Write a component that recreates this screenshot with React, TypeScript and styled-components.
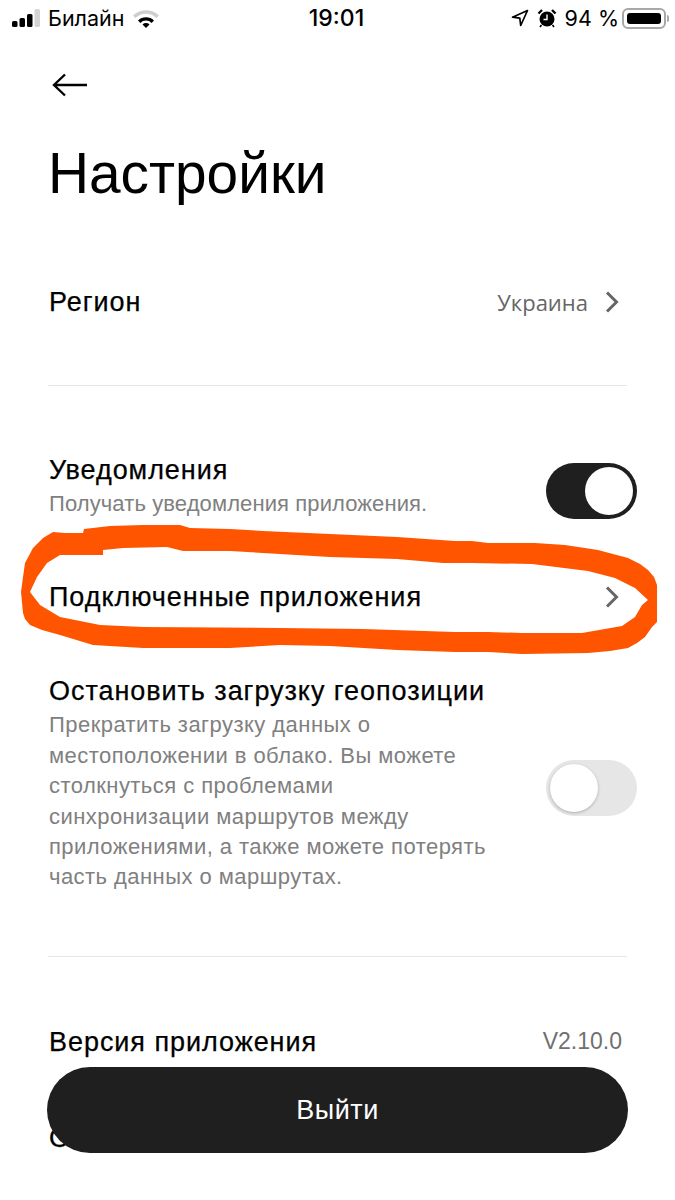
import React from "react";
import styled, { createGlobalStyle } from "styled-components";

const GlobalStyle = createGlobalStyle`
    html, body {
        margin: 0;
        padding: 0;
        background: #ffffff;
    }
`;

// hand-drawn marker ring, traced in page coordinates
const outerRing = [
    [53, 532], [65, 533], [83, 533], [84, 529], [110, 526], [143, 525], [180, 525], [190, 528], [230, 529],
    [263, 531], [330, 534], [397, 537], [455, 541], [472, 541], [488, 543], [535, 543], [565, 545], [598, 550],
    [628, 558], [640, 564], [648, 570], [654, 577], [657, 585], [657, 622], [652, 627], [645, 637], [637, 643],
    [628, 648], [610, 651], [588, 653], [522, 654], [488, 652], [455, 652], [397, 650], [330, 646], [280, 645],
    [230, 648], [143, 648], [93, 645], [60, 635], [42, 630], [30, 625], [25, 619], [23, 613], [21, 592],
    [23, 577], [25, 563], [33, 548], [43, 538],
];

const innerRing = [
    [103, 555], [103, 550], [123, 548], [167, 547], [183, 551], [230, 551], [263, 553], [330, 557], [397, 559],
    [443, 563], [472, 563], [532, 564], [588, 571], [615, 578], [635, 588], [648, 600], [642, 605], [635, 617],
    [622, 626], [582, 633], [522, 633], [488, 632], [455, 632], [363, 629], [280, 628], [143, 627], [100, 625],
    [60, 617], [40, 605], [30, 592], [37, 577], [47, 563], [60, 555],
];

const toPath = (points: number[][]) =>
    "M" + points.map((p) => p.join(" ")).join("L") + "Z";

function Chevron() {
    return (
        <ChevronIcon viewBox="0 0 16 24">
            <path d="M3 2.5l9.5 9.5-9.5 9.5" fill="none" stroke="#666666" strokeWidth="3" />
        </ChevronIcon>
    );
}

export default function App() {
    return (
        <Page>
            <GlobalStyle />
            <StatusBar>
                <StatusLeft>
                    <svg width="30" height="22" viewBox="0 0 30 22">
                        <rect x="1" y="14" width="5.5" height="6" rx="1.5" fill="#000" />
                        <rect x="8.5" y="11" width="5.5" height="9" rx="1.5" fill="#000" />
                        <rect x="16" y="7" width="5.5" height="13" rx="1.5" fill="#000" />
                        <rect x="23.5" y="2" width="5.5" height="18" rx="1.5" fill="#d4d4d4" />
                    </svg>
                    <span>Билайн</span>
                    <WifiIcon width="28" height="20" viewBox="0 0 28 20">
                        <path d="M1 7.5a18.5 18.5 0 0 1 26 0l-2.5 2.6a15 15 0 0 0-21 0z" fill="#cfcfcf" />
                        <path d="M6 12.4a11.5 11.5 0 0 1 16 0l-2.4 2.5a8 8 0 0 0-11.2 0z" fill="#000" />
                        <path d="M10.5 16.5a5 5 0 0 1 7 0L14 20z" fill="#000" />
                    </WifiIcon>
                </StatusLeft>
                <Clock>19:01</Clock>
                <StatusRight>
                    <svg width="18" height="18" viewBox="0 0 18 18">
                        <path d="M16.5 1.5L1.5 8.2l7.3.9.9 7.4z" fill="none" stroke="#000" strokeWidth="1.7" strokeLinejoin="round" />
                    </svg>
                    <svg width="20" height="20" viewBox="0 0 20 20">
                        <circle cx="10" cy="11" r="7.5" fill="#000" />
                        <path d="M1.5 5.5L5 2M18.5 5.5L15 2" stroke="#000" strokeWidth="2.4" />
                        <path d="M10 6.5V11.5H6.5" fill="none" stroke="#fff" strokeWidth="1.4" />
                        <path d="M4.5 17l-1.5 2M15.5 17l1.5 2" stroke="#000" strokeWidth="1.6" />
                    </svg>
                    <span>94 %</span>
                    <Battery>
                        <BatteryFill />
                    </Battery>
                    <BatteryCap />
                </StatusRight>
            </StatusBar>

            <Content>
                <BackButton>
                    <svg width="36" height="24" viewBox="0 0 36 24">
                        <path d="M35 12H2M13 1.5L2 12l11 10.5" fill="none" stroke="#000" strokeWidth="2.4" />
                    </svg>
                </BackButton>
                <Title>Настройки</Title>

                <RegionRow>
                    <RowTitle>Регион</RowTitle>
                    <RowValue>
                        <ValueText>Украина</ValueText>
                        <Chevron />
                    </RowValue>
                </RegionRow>

                <Divider />

                <ToggleRow $top={68}>
                    <div>
                        <RowTitle>Уведомления</RowTitle>
                        <Description $tight>Получать уведомления приложения.</Description>
                    </div>
                    <Toggle $on />
                </ToggleRow>

                <LinkRow>
                    <RowTitle>Подключенные приложения</RowTitle>
                    <Chevron />
                </LinkRow>

                <ToggleRow $top={62}>
                    <div>
                        <RowTitle>Остановить загрузку геопозиции</RowTitle>
                        <Description>
                            Прекратить загрузку данных о
                            <br />
                            местоположении в облако. Вы можете
                            <br />
                            столкнуться с проблемами
                            <br />
                            синхронизации маршрутов между
                            <br />
                            приложениями, а также можете потерять
                            <br />
                            часть данных о маршрутах.
                        </Description>
                    </div>
                    <Toggle />
                </ToggleRow>

                <Divider $top={63} />

                <VersionRow>
                    <RowTitle>Версия приложения</RowTitle>
                    <VersionText>V2.10.0</VersionText>
                </VersionRow>

                <HiddenRow>
                    <RowTitle>Очистить кэш</RowTitle>
                </HiddenRow>
            </Content>

            <LogoutButton>Выйти</LogoutButton>

            <RingMark viewBox="0 510 675 160" width="675" height="160">
                <path d={toPath(outerRing) + toPath(innerRing)} fill="#ff5500" fillRule="evenodd" />
            </RingMark>
        </Page>
    );
}

const Page = styled.div`
    position: relative;
    width: 675px;
    height: 1200px;
    overflow: hidden;
    background: #ffffff;
    color: #000000;
    font-family: "Liberation Sans", Arial, sans-serif;
`;

const StatusBar = styled.div`
    display: grid;
    grid-template-columns: 1fr auto 1fr;
    align-items: center;
    height: 36px;
    padding: 0 6px 0 11px;
    font-family: Inter, "Liberation Sans", sans-serif;
    font-size: 21.5px;
`;

const StatusLeft = styled.div`
    display: flex;
    align-items: center;
    gap: 7px;
`;

const WifiIcon = styled.svg`
    margin-left: 1px;
`;

const Clock = styled.div`
    margin-right: 7px;
    font-weight: 500;
    font-size: 23px;
`;

const StatusRight = styled.div`
    display: flex;
    align-items: center;
    justify-content: flex-end;
    gap: 8px;
`;

const Battery = styled.div`
    display: flex;
    width: 44px;
    height: 21px;
    box-sizing: border-box;
    margin-left: -5px;
    padding: 3px;
    border: 2px solid #a8a8a8;
    border-radius: 6px;
`;

const BatteryFill = styled.div`
    flex: 1;
    background: #000000;
    border-radius: 3px;
`;

const BatteryCap = styled.div`
    width: 2px;
    height: 7px;
    margin-left: -7px;
    background: #a8a8a8;
    border-radius: 0 2px 2px 0;
`;

const Content = styled.div`
    padding: 0 48px;
`;

const BackButton = styled.div`
    display: flex;
    height: 24px;
    margin: 37px 0 0 4px;
`;

const Title = styled.h1`
    margin: 42px 0 0;
    font-size: 56.8px;
    line-height: 70px;
    font-weight: 400;
`;

const RegionRow = styled.div`
    display: flex;
    align-items: center;
    justify-content: space-between;
    height: 32px;
    margin: 77px 7px 0 1px;
`;

const RowTitle = styled.div`
    font-size: 27px;
    line-height: 32px;
    font-weight: 400;
    letter-spacing: 0.95px;
    -webkit-text-stroke: 0.25px #000000;
`;

const RowValue = styled.div`
    display: flex;
    align-items: center;
    gap: 16px;
`;

const ValueText = styled.span`
    font-family: "Open Sans", sans-serif;
    font-size: 22px;
    color: #666666;
`;

const ChevronIcon = styled.svg`
    display: block;
    width: 16px;
    height: 24px;
`;

const Divider = styled.div<{ $top?: number }>`
    height: 1px;
    margin-top: ${(p) => p.$top ?? 67}px;
    background: #e6e6e6;
`;

const ToggleRow = styled.div<{ $top: number }>`
    display: flex;
    align-items: center;
    justify-content: space-between;
    margin: ${(p) => p.$top}px -10px 0 1px;
`;

const Description = styled.div<{ $tight?: boolean }>`
    margin-top: 3px;
    font-size: 22px;
    line-height: 30.4px;
    letter-spacing: ${(p) => (p.$tight ? "0.1px" : "0.45px")};
    color: #808080;
`;

const Toggle = styled.div<{ $on?: boolean }>`
    display: flex;
    justify-content: ${(p) => (p.$on ? "flex-end" : "flex-start")};
    width: 91px;
    height: 56px;
    box-sizing: border-box;
    margin-top: 8px;
    padding: 4px;
    border-radius: 28px;
    background: ${(p) => (p.$on ? "#1f1f1f" : "#e6e6e6")};

    &::after {
        content: "";
        width: 48px;
        height: 48px;
        border-radius: 50%;
        background: #ffffff;
        box-shadow: ${(p) => (p.$on ? "none" : "0 1px 3px rgba(0, 0, 0, 0.25)")};
    }
`;

const LinkRow = styled.div`
    display: flex;
    align-items: center;
    justify-content: space-between;
    height: 32px;
    margin: 62px 7px 0 1px;
`;

const VersionRow = styled.div`
    display: flex;
    align-items: center;
    justify-content: space-between;
    height: 32px;
    margin: 69px 5px 0 1px;
`;

const VersionText = styled.span`
    font-size: 23px;
    color: #707070;
`;

const HiddenRow = styled.div`
    margin: 64px 0 0 1px;
`;

const LogoutButton = styled.button`
    position: absolute;
    left: 47px;
    top: 1067px;
    width: 581px;
    height: 86px;
    padding: 0;
    border: none;
    border-radius: 43px;
    background: #1f1f1f;
    color: #ffffff;
    font-family: "Liberation Sans", Arial, sans-serif;
    font-size: 27px;
    letter-spacing: 0.5px;
`;

const RingMark = styled.svg`
    position: absolute;
    left: 0;
    top: 510px;
`;
